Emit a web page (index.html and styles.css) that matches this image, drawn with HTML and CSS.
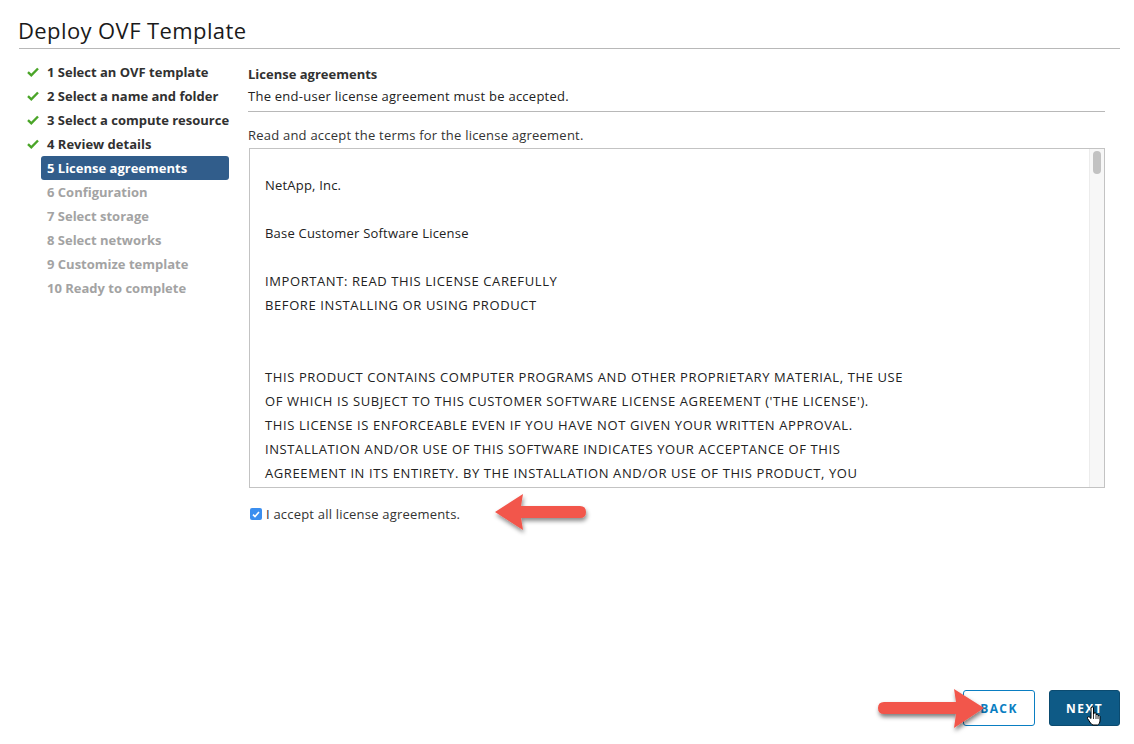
FILE: index.html
```html
<!DOCTYPE html>
<html>
<head>
<meta charset="utf-8">
<title>Deploy OVF Template</title>
<link rel="stylesheet" href="styles.css">
</head>
<body>
<div class="page">
  <header class="header"><h1 class="title">Deploy OVF Template</h1></header>
  <div class="main">
    <nav class="steps">
      <div class="step done"><span class="icon"><svg width="12" height="10" viewBox="0 0 12 10"><path d="M1 5.2 L4.3 8.3 L11 1.5" fill="none" stroke="#4aa528" stroke-width="2.4"/></svg></span><span class="label">1 Select an OVF template</span></div>
      <div class="step done"><span class="icon"><svg width="12" height="10" viewBox="0 0 12 10"><path d="M1 5.2 L4.3 8.3 L11 1.5" fill="none" stroke="#4aa528" stroke-width="2.4"/></svg></span><span class="label">2 Select a name and folder</span></div>
      <div class="step done"><span class="icon"><svg width="12" height="10" viewBox="0 0 12 10"><path d="M1 5.2 L4.3 8.3 L11 1.5" fill="none" stroke="#4aa528" stroke-width="2.4"/></svg></span><span class="label">3 Select a compute resource</span></div>
      <div class="step done"><span class="icon"><svg width="12" height="10" viewBox="0 0 12 10"><path d="M1 5.2 L4.3 8.3 L11 1.5" fill="none" stroke="#4aa528" stroke-width="2.4"/></svg></span><span class="label">4 Review details</span></div>
      <div class="step active"><span class="icon"></span><span class="label">5 License agreements</span></div>
      <div class="step todo"><span class="icon"></span><span class="label">6 Configuration</span></div>
      <div class="step todo"><span class="icon"></span><span class="label">7 Select storage</span></div>
      <div class="step todo"><span class="icon"></span><span class="label">8 Select networks</span></div>
      <div class="step todo"><span class="icon"></span><span class="label">9 Customize template</span></div>
      <div class="step todo"><span class="icon"></span><span class="label">10 Ready to complete</span></div>
    </nav>
    <section class="content">
      <div class="section-head">
        <h2 class="section-title">License agreements</h2>
        <p class="section-sub">The end-user license agreement must be accepted.</p>
      </div>
      <p class="intro">Read and accept the terms for the license agreement.</p>
      <div class="license-box">
        <div class="license-text">
          <p class="lp">NetApp, Inc.</p>
          <p class="lp">Base Customer Software License</p>
          <p class="lp caps">IMPORTANT: READ THIS LICENSE CAREFULLY<br>BEFORE INSTALLING OR USING PRODUCT</p>
          <p class="lp caps gap2">THIS PRODUCT CONTAINS COMPUTER PROGRAMS AND OTHER PROPRIETARY MATERIAL, THE USE<br>OF WHICH IS SUBJECT TO THIS CUSTOMER SOFTWARE LICENSE AGREEMENT ('THE LICENSE').<br>THIS LICENSE IS ENFORCEABLE EVEN IF YOU HAVE NOT GIVEN YOUR WRITTEN APPROVAL.<br>INSTALLATION AND/OR USE OF THIS SOFTWARE INDICATES YOUR ACCEPTANCE OF THIS<br>AGREEMENT IN ITS ENTIRETY. BY THE INSTALLATION AND/OR USE OF THIS PRODUCT, YOU</p>
        </div>
        <div class="scrollbar"><div class="thumb"></div></div>
      </div>
      <label class="accept">
        <span class="checkbox"><svg width="8" height="7" viewBox="0 0 8 7"><path d="M1 3.6 L3 5.5 L7 1" fill="none" stroke="#fff" stroke-width="1.6"/></svg></span>
        <span class="accept-text">I accept all license agreements.</span>
        <svg class="arrow arrow-left" width="104" height="48" viewBox="0 0 104 48">
          <defs><filter id="sh1" x="-20%" y="-30%" width="140%" height="160%"><feDropShadow dx="1" dy="3" stdDeviation="2" flood-color="#000" flood-opacity="0.45"/></filter></defs>
          <path d="M5 22 L33 4 L31 16 L90 16 Q96 16 96 22 Q96 28 90 28 L31 28 L33 40 Z" fill="#f2564b" filter="url(#sh1)"/>
        </svg>
      </label>
    </section>
  </div>
  <footer class="footer">
    <button class="btn btn-flat">Cancel</button>
    <button class="btn btn-outline">Back</button>
    <button class="btn btn-primary">Next</button>
    <svg class="arrow arrow-right" width="120" height="50" viewBox="0 0 120 50">
      <defs><filter id="sh2" x="-20%" y="-30%" width="140%" height="160%"><feDropShadow dx="1" dy="3" stdDeviation="2" flood-color="#000" flood-opacity="0.5"/></filter></defs>
      <path d="M110 22 L80 3 L82 16 L10 16 Q4 16 4 22 Q4 28 10 28 L82 28 L80 42 Z" fill="#f2564b" filter="url(#sh2)"/>
    </svg>
    <svg class="cursor" width="16" height="20" viewBox="0 0 16 20">
      <path d="M5 1.5 Q6.5 0.5 7.5 1.5 L7.5 8 L8 7 Q9.5 6.3 10 7.5 L10 8.5 Q11.5 7.8 12 9 L12 9.8 Q13.5 9.2 14 10.5 L14 15 Q14 18 11.5 19 L7 19 Q5.5 18.5 4.5 17 L1.5 12.5 Q1 11 2.5 10.8 Q3.5 10.8 5 12.5 Z" fill="#fff" stroke="#000" stroke-width="1"/>
      <path d="M7.5 8 L7.5 13 M10 8.5 L10 13 M12 9.8 L12 13" stroke="#000" stroke-width="0.8"/>
    </svg>
  </footer>
</div>
</body>
</html>
```

FILE: styles.css
```css
* { box-sizing: border-box; }
html, body { margin: 0; padding: 0; background: #fff; }
body { font-family: "Open Sans", Lato, sans-serif; color: #333; }
.page { width: 1134px; height: 744px; display: flex; flex-direction: column; padding: 0 14px 0 19px; }
.header { height: 49px; border-bottom: 1px solid #b8b8b8; flex: none; display: flex; align-items: flex-end; }
.title { margin: 0 0 3px -1px; font-weight: 400; font-size: 22px; line-height: 30px; color: #1a1a1a; letter-spacing: 0.4px; }
.main { display: flex; flex: 1; }
.steps { width: 210px; padding-top: 11px; flex: none; }
.step { display: flex; height: 24px; align-items: center; font-size: 13px; font-weight: 700; }
.icon { width: 22px; flex: none; display: flex; align-items: center; padding-left: 8px; }
.label { flex: 1; height: 24px; line-height: 24px; padding-left: 6px; border-radius: 3px; white-space: nowrap; }
.done .label { color: #313131; }
.active .label { background: #315d8b; color: #fff; }
.todo .label { color: #a3a3a3; }
.content { flex: 1; padding-left: 19px; padding-right: 15px; padding-top: 14px; position: relative; }
.section-head { border-bottom: 1px solid #b8b8b8; padding-bottom: 4px; }
.section-title { margin: 0; font-size: 13px; font-weight: 700; line-height: 22px; color: #313131; }
.section-sub { margin: 0; font-size: 13px; line-height: 22px; color: #222; letter-spacing: 0.25px; }
.intro { margin: 12px 0 0; font-size: 13px; line-height: 22px; color: #333; letter-spacing: 0.22px; }
.license-box { margin: 2px 0 0 1px; height: 340px; border: 1px solid #c3c3c3; display: flex; overflow: hidden; }
.license-text { flex: 1; padding: 24px 0 0 15px; font-size: 13px; line-height: 24px; color: #222; overflow: hidden; letter-spacing: 0.2px; }
.lp { margin: 0 0 24px; white-space: nowrap; }
.lp.caps { letter-spacing: 0.6px; }
.lp.gap2 { margin-top: 48px; }
.scrollbar { width: 15px; flex: none; background: #f7f7f7; border-left: 1px solid #ececec; padding: 2px 3px 0 3px; }
.thumb { height: 23px; border-radius: 5px; background: #c2c2c2; }
.accept { display: flex; align-items: center; margin: 14px 0 0 2px; height: 24px; position: relative; }
.checkbox { width: 12px; height: 12px; border-radius: 2px; background: #3b8eef; display: flex; align-items: center; justify-content: center; }
.accept-text { margin-left: 4px; font-size: 13px; color: #333; letter-spacing: 0.2px; }
.arrow { position: absolute; }
.arrow-left { left: 240px; top: -12px; }
.footer { height: 54px; flex: none; display: flex; justify-content: flex-end; align-items: flex-start; gap: 14px; position: relative; }
.btn { height: 36px; padding: 0 15px; font-family: "Open Sans", Lato, sans-serif; font-size: 12px; font-weight: 700; letter-spacing: 1.4px; text-transform: uppercase; border-radius: 3px; background: transparent; border: 1px solid transparent; }
.btn-flat { color: #4a5a66; padding: 0 8px; }
.btn-outline { width: 72px; color: #0a7ec2; border-color: #0a7ec2; }
.btn-primary { width: 71px; background: #0e5a86; border-color: #0b4b70; color: #fff; }
.arrow-right { left: 855px; top: -4px; }
.cursor { position: absolute; left: 1067px; top: 16px; }
```
